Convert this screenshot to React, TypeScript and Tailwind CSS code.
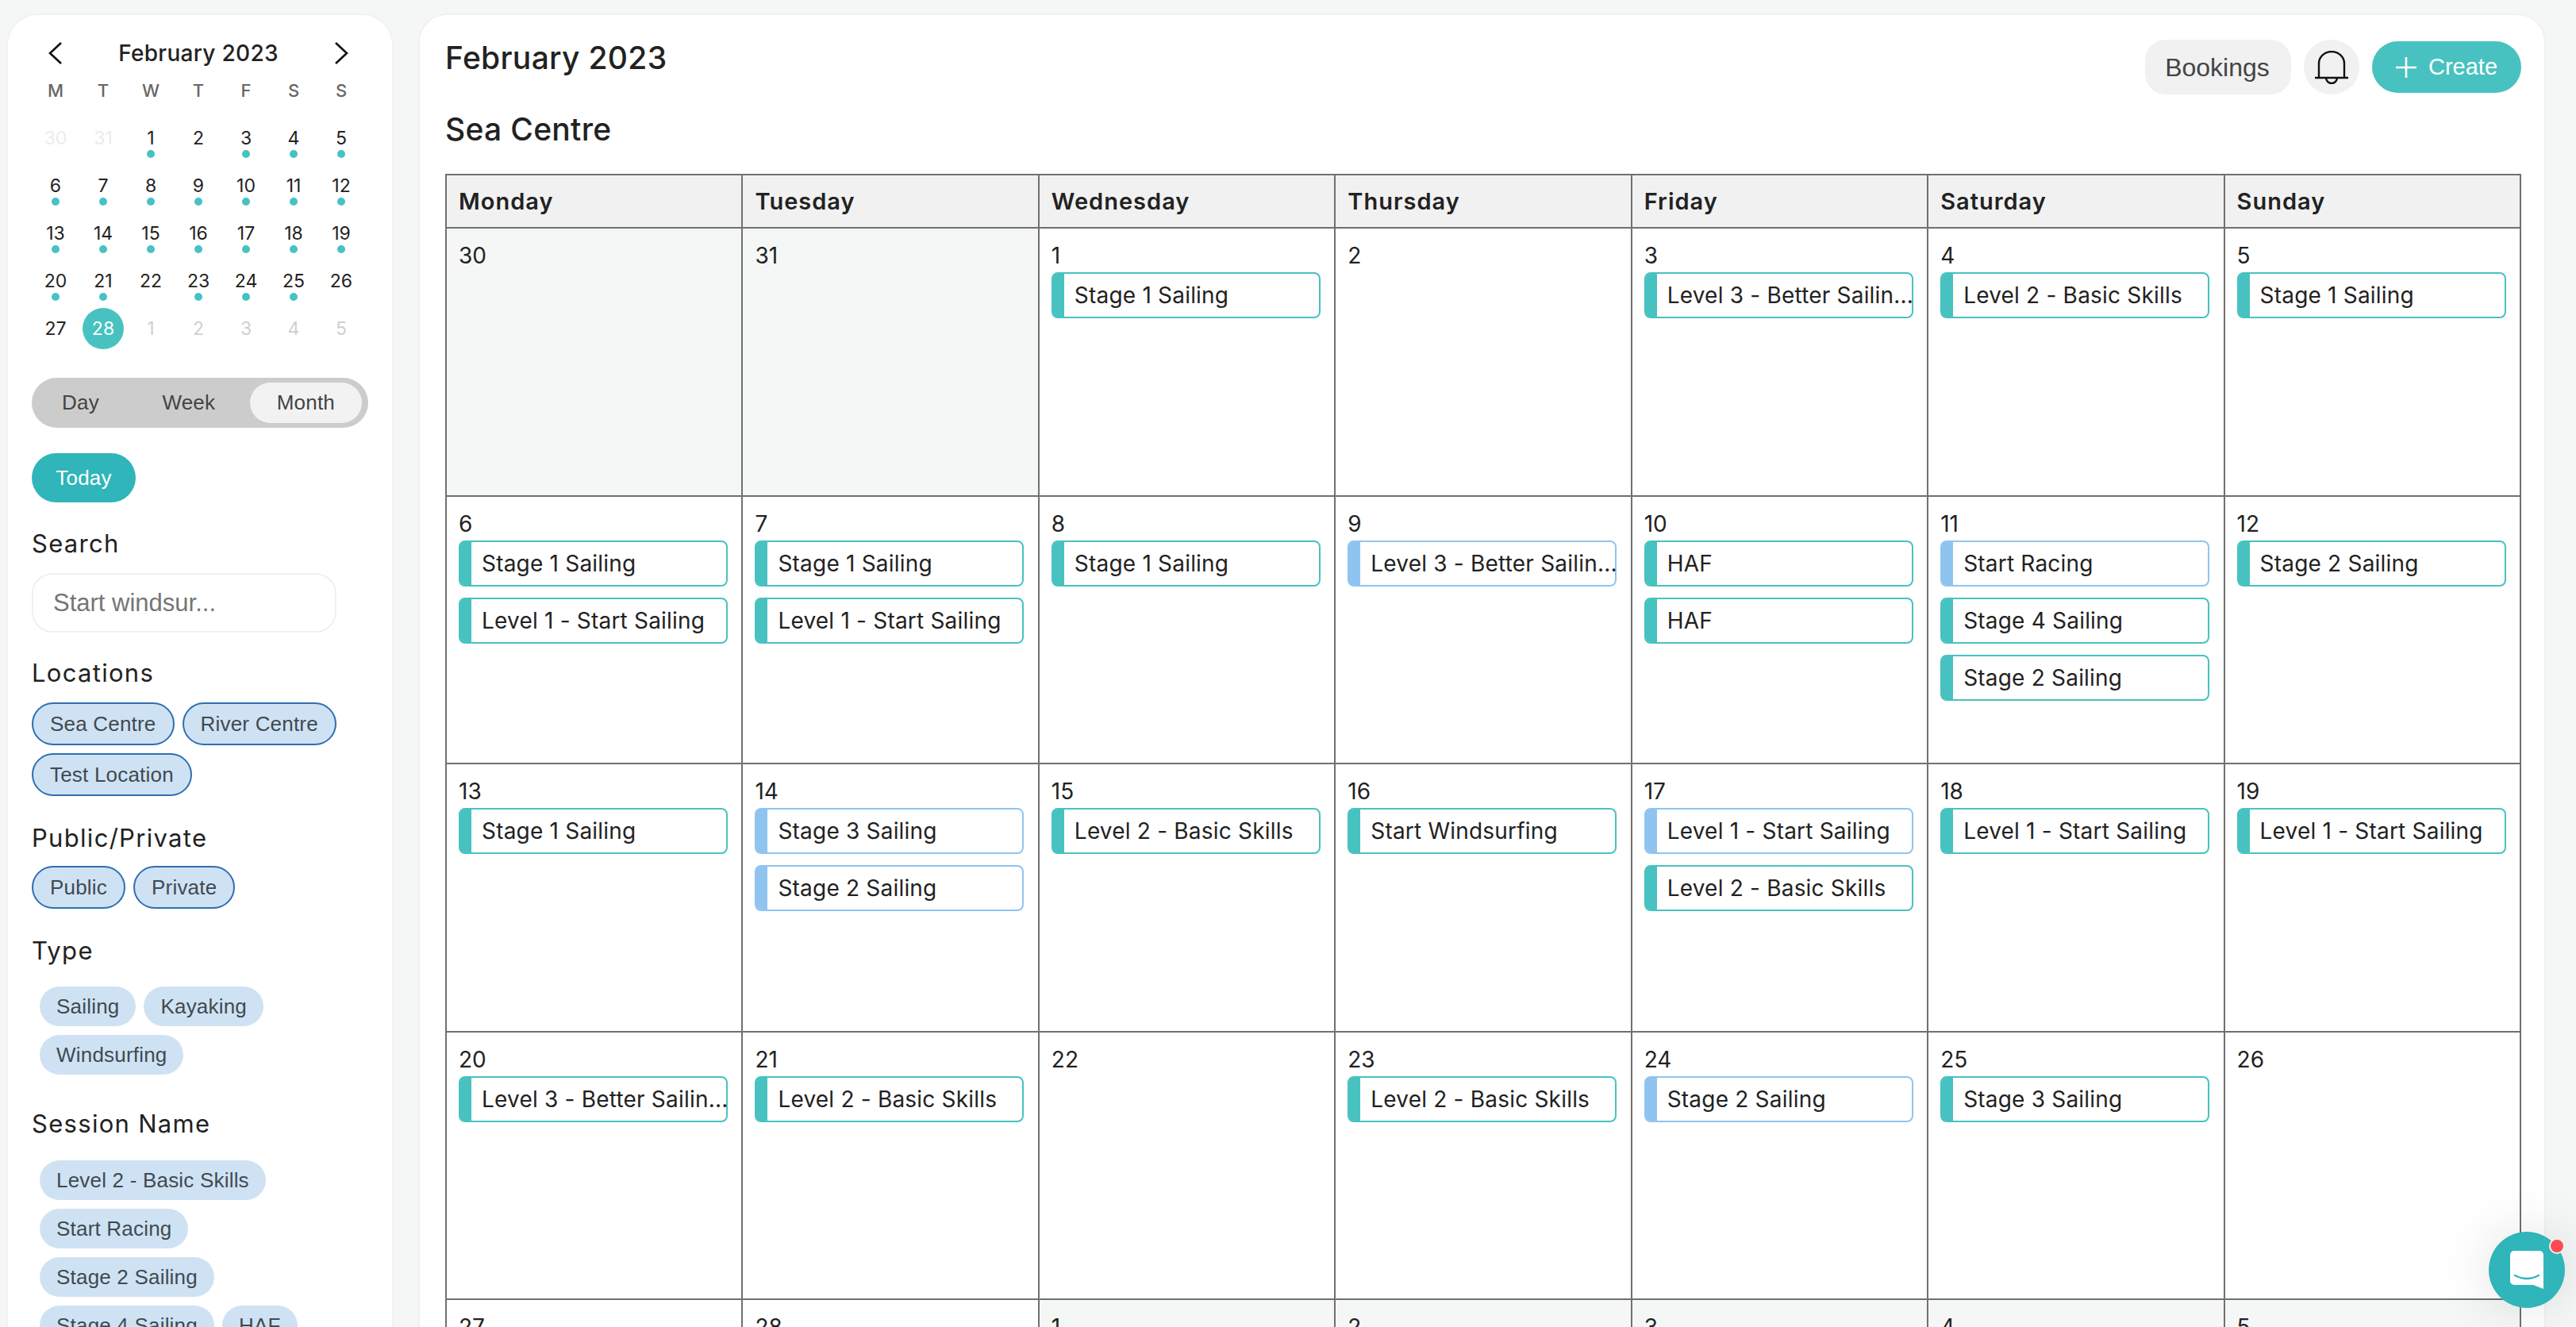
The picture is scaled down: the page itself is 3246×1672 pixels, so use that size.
type EventItem = {
  name: string;
  blue?: boolean;
};

type DayCell = {
  day: number;
  muted?: boolean;
  events?: EventItem[];
};

const weekDays = ['Monday', 'Tuesday', 'Wednesday', 'Thursday', 'Friday', 'Saturday', 'Sunday'];
const miniHeads = ['M', 'T', 'W', 'T', 'F', 'S', 'S'];
const dotDays = [1, 3, 4, 5, 6, 7, 8, 9, 10, 11, 12, 13, 14, 15, 16, 17, 18, 19, 20, 21, 23, 24, 25];

const better = 'Level 3 - Better Sailin...';

const days: DayCell[] = [
  { day: 30, muted: true },
  { day: 31, muted: true },
  { day: 1, events: [{ name: 'Stage 1 Sailing' }] },
  { day: 2 },
  { day: 3, events: [{ name: better }] },
  { day: 4, events: [{ name: 'Level 2 - Basic Skills' }] },
  { day: 5, events: [{ name: 'Stage 1 Sailing' }] },
  { day: 6, events: [{ name: 'Stage 1 Sailing' }, { name: 'Level 1 - Start Sailing' }] },
  { day: 7, events: [{ name: 'Stage 1 Sailing' }, { name: 'Level 1 - Start Sailing' }] },
  { day: 8, events: [{ name: 'Stage 1 Sailing' }] },
  { day: 9, events: [{ name: better, blue: true }] },
  { day: 10, events: [{ name: 'HAF' }, { name: 'HAF' }] },
  { day: 11, events: [{ name: 'Start Racing', blue: true }, { name: 'Stage 4 Sailing' }, { name: 'Stage 2 Sailing' }] },
  { day: 12, events: [{ name: 'Stage 2 Sailing' }] },
  { day: 13, events: [{ name: 'Stage 1 Sailing' }] },
  { day: 14, events: [{ name: 'Stage 3 Sailing', blue: true }, { name: 'Stage 2 Sailing', blue: true }] },
  { day: 15, events: [{ name: 'Level 2 - Basic Skills' }] },
  { day: 16, events: [{ name: 'Start Windsurfing' }] },
  { day: 17, events: [{ name: 'Level 1 - Start Sailing', blue: true }, { name: 'Level 2 - Basic Skills' }] },
  { day: 18, events: [{ name: 'Level 1 - Start Sailing' }] },
  { day: 19, events: [{ name: 'Level 1 - Start Sailing' }] },
  { day: 20, events: [{ name: better }] },
  { day: 21, events: [{ name: 'Level 2 - Basic Skills' }] },
  { day: 22 },
  { day: 23, events: [{ name: 'Level 2 - Basic Skills' }] },
  { day: 24, events: [{ name: 'Stage 2 Sailing', blue: true }] },
  { day: 25, events: [{ name: 'Stage 3 Sailing' }] },
  { day: 26 },
  { day: 27 },
  { day: 28 },
  { day: 1, muted: true },
  { day: 2, muted: true },
  { day: 3, muted: true },
  { day: 4, muted: true },
  { day: 5, muted: true },
];

function Chevron({ right }: { right?: boolean }) {
  return (
    <svg width="18" height="28" viewBox="0 0 18 28" fill="none" stroke="#111" strokeWidth="2.6">
      <path d={right ? 'M2 1 L16 14 L2 27' : 'M16 1 L2 14 L16 27'} />
    </svg>
  );
}

function MiniCalendar() {
  const lead = [30, 31];
  const trail = [1, 2, 3, 4, 5];
  return (
    <div className="w-[420px]">
      <div className="grid grid-cols-[60px_300px_60px] h-[60px] items-center">
        <div className="flex justify-center">
          <Chevron />
        </div>
        <div className="text-center text-[28px] font-medium text-[#222] tracking-[0.3px]">February 2023</div>
        <div className="flex justify-center">
          <Chevron right />
        </div>
      </div>
      <div className="grid grid-cols-7 h-[47px]">
        {miniHeads.map((d, i) => (
          <div key={i} className="text-center text-[22px] leading-[34px] font-medium text-[#666]">
            {d}
          </div>
        ))}
      </div>
      <div className="grid grid-cols-7">
        {lead.map((d) => (
          <div key={d} className="h-[60px] pt-[15px] text-center text-[23px] leading-[30px] text-[#ececec]">
            {d}
          </div>
        ))}
        {Array.from({ length: 27 }, (_, i) => i + 1).map((d) => (
          <div key={d} className="h-[60px] pt-[15px] flex flex-col items-center text-[23px] leading-[30px] text-[#222]">
            {d}
            {dotDays.includes(d) && <span className="w-[10px] h-[10px] rounded-full bg-[#48c2c0]" />}
          </div>
        ))}
        <div className="h-[60px] flex items-center justify-center">
          <span className="w-[52px] h-[52px] rounded-full bg-[#48c2c0] text-white text-[23px] flex items-center justify-center">
            28
          </span>
        </div>
        {trail.map((d) => (
          <div key={d} className="h-[60px] pt-[15px] text-center text-[23px] leading-[30px] text-[#cfcfcf]">
            {d}
          </div>
        ))}
      </div>
    </div>
  );
}

function ViewToggle() {
  return (
    <div className="mt-8 w-[424px] h-[63px] rounded-full bg-[#cccccc] p-[6px] px-2 flex justify-between items-center text-[26px] tracking-[0.2px] text-[#444] [font-family:'Liberation_Sans',sans-serif]">
      <span className="pl-[30px] pr-[36px]">Day</span>
      <span className="px-[34px]">Week</span>
      <span className="px-[34px] h-[51px] flex items-center rounded-full bg-[#f2f2f2]">Month</span>
    </div>
  );
}

function Label({ children, className }: { children: React.ReactNode; className: string }) {
  return <div className={`h-10 leading-10 text-[31px] text-[#222] tracking-[1.3px] ${className}`}>{children}</div>;
}

function OutlineChips({ items }: { items: string[] }) {
  return (
    <div className="flex flex-wrap gap-[10px] w-[424px]">
      {items.map((c) => (
        <span
          key={c}
          className="h-[54px] px-[21px] flex items-center rounded-full bg-[#cfe2f3] border-2 border-[#2f6fae] text-[26px] tracking-[0.2px] text-[#3f4a52] [font-family:'Liberation_Sans',sans-serif]"
        >
          {c}
        </span>
      ))}
    </div>
  );
}

function SoftChips({ items }: { items: string[] }) {
  return (
    <div className="flex flex-wrap gap-x-[10px] gap-y-[11px] ml-[10px] w-[400px]">
      {items.map((c) => (
        <span
          key={c}
          className="h-[50px] px-[21px] flex items-center rounded-full bg-[#cfe2f3] text-[26px] tracking-[0.2px] text-[#3f4a52] [font-family:'Liberation_Sans',sans-serif]"
        >
          {c}
        </span>
      ))}
    </div>
  );
}

function Sidebar() {
  return (
    <aside className="w-[488px] shrink-0 bg-white rounded-t-[40px] border-2 border-b-0 border-[#f0f2f1] pl-[30px] pt-[18px]">
      <MiniCalendar />
      <ViewToggle />
      <button className="mt-8 block w-[131px] h-[62px] rounded-full bg-[#2fb5ba] text-white text-[26px] tracking-[0.2px] [font-family:'Liberation_Sans',sans-serif]">
        Today
      </button>
      <Label className="mt-8">Search</Label>
      <input
        placeholder="Start windsur..."
        className="mt-[17px] block w-[384px] h-[75px] rounded-[26px] border-2 border-[#f0f0f0] pl-[25px] text-[31px] placeholder:text-[#757575] [font-family:'Liberation_Sans',sans-serif]"
      />
      <Label className="mt-[31px] mb-[17px]">Locations</Label>
      <OutlineChips items={['Sea Centre', 'River Centre', 'Test Location']} />
      <Label className="mt-[33px] mb-[15px]">Public/Private</Label>
      <OutlineChips items={['Public', 'Private']} />
      <Label className="mt-[33px] mb-[25px]">Type</Label>
      <SoftChips items={['Sailing', 'Kayaking', 'Windsurfing']} />
      <Label className="mt-[42px] mb-[26px]">Session Name</Label>
      <SoftChips items={['Level 2 - Basic Skills', 'Start Racing', 'Stage 2 Sailing', 'Stage 4 Sailing', 'HAF']} />
    </aside>
  );
}

function BellIcon() {
  return (
    <svg width="42" height="42" viewBox="0 0 42 42" fill="none" stroke="#111" strokeWidth="2.4">
      <path d="M5 34 V16 a16 15 0 0 1 32 0 V34" />
      <path d="M0 34 H42" />
      <path d="M14 34 a7 7 0 0 0 14 0" />
    </svg>
  );
}

function PlusIcon() {
  return (
    <svg width="28" height="28" viewBox="0 0 28 28" fill="none" stroke="#fff" strokeWidth="2.6">
      <path d="M14 1 V27 M1 14 H27" />
    </svg>
  );
}

function TopActions() {
  return (
    <div className="mt-[2px] flex items-center gap-4 [font-family:'Liberation_Sans',sans-serif]">
      <button className="w-[184px] h-[69px] rounded-[26px] bg-[#f1f1f1] text-[32px] text-[#444] pr-[2px]">
        Bookings
      </button>
      <button className="w-[70px] h-[69px] rounded-full bg-[#f1f1f1] flex items-center justify-center">
        <BellIcon />
      </button>
      <button className="w-[188px] h-[65px] rounded-full bg-[#48c2c0] text-white text-[29px] flex items-center pl-[29px] gap-[14px]">
        <PlusIcon />
        Create
      </button>
    </div>
  );
}

function EventCard({ item }: { item: EventItem }) {
  return (
    <div
      className={`h-[58px] w-[339px] flex rounded-[8px] border-2 ${
        item.blue ? 'border-[#90c4f0]' : 'border-[#48c2c0]'
      }`}
    >
      <span className={`w-[14px] shrink-0 rounded-l-[5px] ${item.blue ? 'bg-[#90c4f0]' : 'bg-[#48c2c0]'}`} />
      <span className="pl-[13px] text-[28px] tracking-[0.2px] leading-[55px] text-[#222] whitespace-nowrap">
        {item.name}
      </span>
    </div>
  );
}

function MonthGrid() {
  return (
    <div className="mt-[31px] w-[2616px] border-l-2 border-t-2 border-[#707070] grid grid-cols-7">
      {weekDays.map((d) => (
        <div
          key={d}
          className="h-[67px] border-r-2 border-b-2 border-[#707070] bg-[#f1f1f1] pl-[15px] flex items-center text-[29px] tracking-[1px] font-semibold text-[#222]"
        >
          {d}
        </div>
      ))}
      {days.map((c, i) => (
        <div
          key={i}
          className={`h-[337.5px] border-r-2 border-b-2 border-[#707070] pl-[15px] pt-[18px] ${
            c.muted ? 'bg-[#f5f7f6]' : 'bg-white'
          }`}
        >
          <div className="h-[37px] leading-[32px] text-[28px] text-[#222]">{c.day}</div>
          <div className="flex flex-col gap-[14px]">
            {c.events?.map((e, j) => (
              <EventCard key={j} item={e} />
            ))}
          </div>
        </div>
      ))}
    </div>
  );
}

function ChatButton() {
  return (
    <div className="fixed left-[3136px] top-[1552px] w-24 h-24 rounded-full bg-[#2fb5ba] flex items-center justify-center shadow-[0_0_70px_rgba(0,0,0,0.12)]">
      <svg width="42" height="48" viewBox="0 0 42 48">
        <path
          d="M5 0 H37 a5 5 0 0 1 5 5 V48 L29 43 H5 a5 5 0 0 1 -5 -5 V5 a5 5 0 0 1 5 -5 Z"
          fill="#fff"
        />
        <path d="M6 31 Q21 39 36 31" fill="none" stroke="#2fb5ba" strokeWidth="2.4" strokeLinecap="round" />
      </svg>
      <span className="absolute right-0 top-[8px] w-[20px] h-[20px] rounded-full bg-[#ff4a4f] border-2 border-[#e8f4f4]" />
    </div>
  );
}

export default function App() {
  return (
    <div className="h-[1672px] w-[3246px] overflow-hidden bg-[#f5f7f6] pl-2 pt-[17px] flex gap-[31px] [font-family:Inter,sans-serif]">
      <Sidebar />
      <main className="w-[2681px] shrink-0 bg-white rounded-t-[36px] border-2 border-b-0 border-[#f0f2f1] pl-8 pt-[29px]">
        <div className="flex justify-between w-[2616px]">
          <h1 className="text-[39px] tracking-[0.3px] leading-[50px] font-medium text-[#222]">February 2023</h1>
          <TopActions />
        </div>
        <h2 className="mt-[19px] text-[39px] tracking-[0.3px] leading-[50px] font-medium text-[#222]">Sea Centre</h2>
        <MonthGrid />
      </main>
      <ChatButton />
    </div>
  );
}
